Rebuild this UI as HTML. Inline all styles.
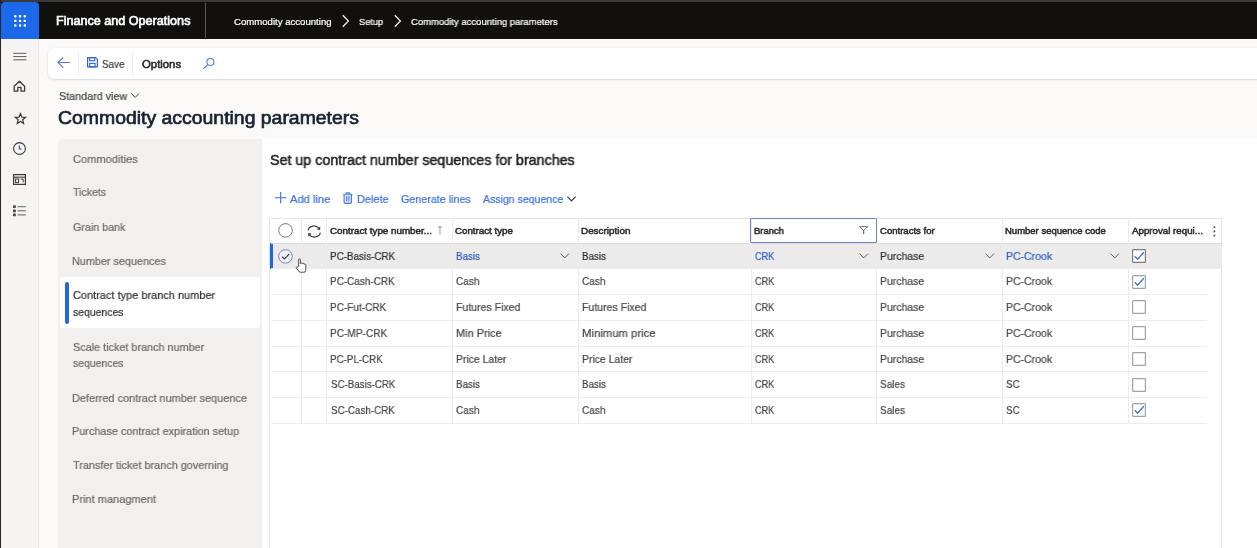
<!DOCTYPE html>
<html lang="en"><head><meta charset="utf-8"><title>Commodity accounting parameters</title>
<style>
html,body{margin:0;padding:0;width:1257px;height:548px;overflow:hidden;background:#faf9f8}
#app{position:relative;left:0;top:0;width:1257px;height:548px;overflow:hidden;background:#faf9f8;font-family:"Liberation Sans",sans-serif}
.t{position:absolute;white-space:nowrap;display:inline-block;transform-origin:0 50%;will-change:transform}
div{position:absolute;box-sizing:border-box}
svg{position:absolute;overflow:visible}
.nav{left:0;top:39px;width:39.3px;height:509px;background:#f5f4f3;border-right:1px solid #e6e5e4}
.hdr{left:0;top:0;width:1257px;height:39px;background:#11100f}
.topstrip{left:0;top:0;width:1257px;height:2.3px;background:#3a3a3a}
.waffle{left:1.3px;top:2.2px;width:37.3px;height:36.8px;background:#1b68e8;border-radius:4px 4px 0 0}
.leftedge{left:0;top:0;width:1.4px;height:548px;background:#262626}
.hdiv{left:205px;top:3px;width:1px;height:35px;background:#5a5958}
.toolbar{left:47.5px;top:47.6px;width:1230px;height:31.2px;background:#fff;border-radius:6px;box-shadow:0 1px 2px rgba(0,0,0,.13),0 0 2px rgba(0,0,0,.07)}
.tdiv{top:52px;width:1px;height:24px;background:#ececec}
.tabs{left:58.2px;top:138.8px;width:204.2px;height:420px;background:#f1f0ef;border-radius:5px 0 0 0}
.content{left:262.3px;top:139px;width:1000px;height:420px;background:#fff}
.tabsel{left:60px;top:277px;width:200px;height:51px;background:#fff;border-radius:3px}
.tabbar{left:64.7px;top:281.5px;width:4px;height:42.3px;background:#1f66e5;border-radius:2px}
.grid{left:269.4px;top:217.5px;width:953px;height:340px;border:1px solid #e6e5e4;background:#fff}
.rowsel{left:270.5px;width:951.5px;background:#ecebea}
.selbar{left:269.5px;width:3.8px;background:#1f66e5}
.hl{left:270.5px;width:936.5px;height:1px;background:#ececec}
.vl{top:218.5px;width:1px;height:205px;background:#ececec}
.focus{left:750.3px;top:217.8px;width:126.5px;height:25.2px;border:1px solid #6b84c6;border-radius:1px}
</style></head>
<body>
<div id="app">
<div class="nav"></div>
<div class="hdr"></div>
<div class="topstrip"></div>
<div class="waffle"></div>
<div class="leftedge"></div>
<div class="hdiv"></div>
<div class="toolbar"></div>
<div class="tdiv" style="left:78px"></div><div class="tdiv" style="left:132px"></div>
<div class="tabs"></div>
<div class="content"></div>
<div class="tabsel"></div><div class="tabbar"></div>
<div class="grid"></div>
<div class="rowsel" style="top:243.0px;height:25.75px"></div>
<div class="selbar" style="top:243.0px;height:26.0px"></div>
<div class="hl" style="top:242.5px;width:951px;background:#dcdcdc"></div>
<div class="hl" style="top:268.25px"></div>
<div class="hl" style="top:294.0px"></div>
<div class="hl" style="top:319.75px"></div>
<div class="hl" style="top:345.5px"></div>
<div class="hl" style="top:371.25px"></div>
<div class="hl" style="top:397.0px"></div>
<div class="hl" style="top:422.75px"></div>
<div class="vl" style="left:301px"></div>
<div class="vl" style="left:326px"></div>
<div class="vl" style="left:451.5px"></div>
<div class="vl" style="left:578px"></div>
<div class="vl" style="left:750.5px"></div>
<div class="vl" style="left:876px"></div>
<div class="vl" style="left:1001.5px"></div>
<div class="vl" style="left:1128px"></div>
<div class="focus"></div>
<!-- waffle -->
<svg style="left:14px;top:15.3px" width="13" height="12" viewBox="0 0 13 12"><g fill="#fff">
<rect x="0.1" y="0.1" width="2.4" height="2.4" rx=".7"/><rect x="4.85" y="0.1" width="2.4" height="2.4" rx=".7"/><rect x="9.6" y="0.1" width="2.4" height="2.4" rx=".7"/>
<rect x="0.1" y="4.7" width="2.4" height="2.4" rx=".7"/><rect x="4.85" y="4.7" width="2.4" height="2.4" rx=".7"/><rect x="9.6" y="4.7" width="2.4" height="2.4" rx=".7"/>
<rect x="0.1" y="9.3" width="2.4" height="2.4" rx=".7"/><rect x="4.85" y="9.3" width="2.4" height="2.4" rx=".7"/><rect x="9.6" y="9.3" width="2.4" height="2.4" rx=".7"/></g></svg>
<!-- hamburger -->
<svg style="left:13px;top:51.7px" width="14" height="10" viewBox="0 0 14 10"><g stroke="#605e5c" stroke-width="1" fill="none"><path d="M0.3 1.3H13.4M0.3 4.55H13.4M0.3 7.8H13.4"/></g></svg>
<!-- home -->
<svg style="left:13.4px;top:80.4px" width="13" height="12" viewBox="0 0 13 12"><path d="M1.2 6.2 6.4 1.2 11.6 6.2V11.2H8V7.3H4.8V11.2H1.2Z" fill="none" stroke="#3b3a39" stroke-width="1.3" stroke-linejoin="round"/></svg>
<!-- star -->
<svg style="left:13.5px;top:111.6px" width="13" height="13" viewBox="0 0 13 13"><path d="M6.40 1.60 7.81 5.06 11.54 5.33 8.68 7.74 9.57 11.37 6.40 9.40 3.23 11.37 4.12 7.74 1.26 5.33 4.99 5.06Z" fill="none" stroke="#3b3a39" stroke-width="1.2" stroke-linejoin="miter"/></svg>
<!-- clock -->
<svg style="left:13.4px;top:141.7px" width="13" height="13" viewBox="0 0 13 13"><circle cx="6.5" cy="6.5" r="5.9" fill="none" stroke="#3b3a39" stroke-width="1.1"/><path d="M6.3 3.4V7H8.8" fill="none" stroke="#3b4a9a" stroke-width="1.1"/></svg>
<!-- workspace -->
<svg style="left:13.4px;top:174.1px" width="13" height="11" viewBox="0 0 13 11"><rect x=".6" y=".6" width="11.8" height="9.8" fill="none" stroke="#3b3a39" stroke-width="1.2"/><path d="M.6 3.2H12.4" stroke="#3b3a39" stroke-width="1.1"/><rect x="2.6" y="5" width="3" height="3.6" fill="none" stroke="#3b3a39" stroke-width="1"/><path d="M7.6 5.2H10.2V8.4" fill="none" stroke="#3b3a39" stroke-width="1"/></svg>
<!-- modules list -->
<svg style="left:13px;top:205.2px" width="13" height="12" viewBox="0 0 13 12"><g fill="#4a4948"><rect x="0" y="0.3" width="2.8" height="2.8" rx=".5"/><rect x="0" y="4.4" width="2.8" height="2.8" rx=".5"/><rect x="0" y="8.5" width="2.8" height="2.8" rx=".5"/></g><path d="M4.6 1.7H12.8M4.6 5.8H12.8M4.6 9.9H12.8" stroke="#605e5c" stroke-width="1"/></svg>
<!-- breadcrumb chevrons -->
<svg style="left:342px;top:15.2px" width="7" height="12" viewBox="0 0 7 12"><path d="M.8.3 6.4 6 .8 11.7" fill="none" stroke="#f3efe6" stroke-width="1.3"/></svg>
<svg style="left:394px;top:15.2px" width="7" height="12" viewBox="0 0 7 12"><path d="M.8.3 6.4 6 .8 11.7" fill="none" stroke="#f3efe6" stroke-width="1.3"/></svg>
<!-- back arrow -->
<svg style="left:57.3px;top:57.2px" width="13" height="11" viewBox="0 0 13 11"><path d="M13 5.5H1M6.2.3 1 5.5l5.2 5.2" fill="none" stroke="#4a7be0" stroke-width="1.1"/></svg>
<!-- save -->
<svg style="left:87px;top:56.9px" width="11" height="10.5" viewBox="0 0 11 10.5"><path d="M.6.6H8.6L10.4 2.4V9.9H.6Z" fill="none" stroke="#2f63d6" stroke-width="1.2"/><rect x="2.7" y=".6" width="5" height="3.2" fill="none" stroke="#2f63d6" stroke-width="1.1"/><rect x="2.7" y="6.4" width="5.4" height="3.5" fill="none" stroke="#2f63d6" stroke-width="1.1"/></svg>
<!-- search -->
<svg style="left:203px;top:57.7px" width="11.5" height="11" viewBox="0 0 11.5 11"><circle cx="7.4" cy="4" r="3.5" fill="none" stroke="#4f7de2" stroke-width="1.1"/><path d="M4.9 6.5.3 10.8" stroke="#4f7de2" stroke-width="1.1"/></svg>
<!-- standard view chevron -->
<svg style="left:131.4px;top:92.9px" width="8.4" height="5" viewBox="0 0 8.4 5"><path d="M.3.4 4.2 4.5 8.1.4" fill="none" stroke="#484644" stroke-width="1"/></svg>
<!-- plus -->
<svg style="left:274.8px;top:192.3px" width="11.4" height="11.4" viewBox="0 0 11.4 11.4"><path d="M5.7 0V11.4M0 5.7H11.4" stroke="#3c6fe0" stroke-width="1.1"/></svg>
<!-- trash -->
<svg style="left:342.5px;top:191.7px" width="9.6" height="12" viewBox="0 0 9.6 12"><path d="M.2 2.3H9.4M3.2 2.3V.8H6.4V2.3M1.1 2.3V10.2Q1.1 11.4 2.3 11.4H7.3Q8.5 11.4 8.5 10.2V2.3" fill="#dbe5fa" stroke="#4a78e0" stroke-width="1.1"/><path d="M3.7 4.3V9.3M5.9 4.3V9.3" stroke="#4a78e0" stroke-width="1.1"/></svg>
<!-- assign chevron -->
<svg style="left:567px;top:195.8px" width="9" height="6" viewBox="0 0 9 6"><path d="M.4.6 4.5 4.9 8.6.6" fill="none" stroke="#323130" stroke-width="1.1"/></svg>
<!-- header select circle -->
<svg style="left:278.2px;top:223px" width="15" height="15" viewBox="0 0 15 15"><circle cx="7.5" cy="7.4" r="6.8" fill="#fff" stroke="#7a7877" stroke-width="1"/></svg>
<!-- refresh -->
<svg style="left:307.3px;top:225px" width="14.5" height="13" viewBox="0 0 14.5 13"><path d="M1.1 5.3A5.9 5 0 0 1 12 3.4M13.3 7.7A5.9 5 0 0 1 2.4 9.6" fill="none" stroke="#3b3a39" stroke-width="1.15"/><path d="M13.2 1.5V4.9L9.9 4.4ZM1.2 11.5V8.1L4.5 8.6Z" fill="#3b3a39"/></svg>
<!-- row check circle -->
<svg style="left:278px;top:248.7px" width="15" height="15" viewBox="0 0 15 15"><circle cx="7.5" cy="7.4" r="6.8" fill="#f1f2f8" stroke="#7485cc" stroke-width="1"/><path d="M3.9 7.6 6.4 10 11.2 5" fill="none" stroke="#3b3a39" stroke-width="1.1"/></svg>
<!-- cursor hand -->
<svg style="left:295px;top:258px" width="12" height="15" viewBox="0 0 12 15"><path d="M3.6 8.6V1.8Q3.6.8 4.5.8Q5.4.8 5.4 1.8V5.6Q5.6 4.9 6.4 4.9Q7.2 4.9 7.3 5.8Q7.6 5.2 8.3 5.3Q9.1 5.4 9.1 6.3Q9.5 5.9 10.1 6.1Q10.8 6.3 10.8 7.2V10.4Q10.8 12.4 9.8 14.2H4.6Q3.5 12.6 1.6 10.6Q.8 9.7 1.4 9.1Q2.1 8.5 2.9 9.3Z" fill="#fff" stroke="#3a3a3a" stroke-width=".9" stroke-linejoin="round"/></svg>
<!-- sort arrow -->
<svg style="left:437px;top:225px" width="6" height="10" viewBox="0 0 6 10"><path d="M3 9.6V.9M.9 2.9 3 .8 5.1 2.9" fill="none" stroke="#9d9b99" stroke-width=".95"/></svg>
<!-- filter -->
<svg style="left:859.3px;top:226.3px" width="9.5" height="9" viewBox="0 0 9.5 9"><path d="M.6.6H8.6L4.6 4.6Z" fill="none" stroke="#6a6968" stroke-width=".9" stroke-linejoin="round"/><path d="M4.6 4.2V8" stroke="#6a6968" stroke-width="1.3"/></svg>
<!-- more dots -->
<svg style="left:1213px;top:225.5px" width="3" height="11" viewBox="0 0 3 11"><g fill="#484644"><rect x=".6" y=".3" width="1.6" height="1.8"/><rect x=".6" y="4.5" width="1.6" height="1.8"/><rect x=".6" y="8.7" width="1.6" height="1.8"/></g></svg>
<!-- row dropdown chevrons -->
<svg style="left:560.1px;top:252.9px" width="9.5" height="6" viewBox="0 0 9.5 6"><path d="M.5.6 4.75 4.9 9 .6" fill="none" stroke="#605e5c" stroke-width="1"/></svg>
<svg style="left:858.7px;top:252.9px" width="9.5" height="6" viewBox="0 0 9.5 6"><path d="M.5.6 4.75 4.9 9 .6" fill="none" stroke="#605e5c" stroke-width="1"/></svg>
<svg style="left:984.6px;top:252.9px" width="9.5" height="6" viewBox="0 0 9.5 6"><path d="M.5.6 4.75 4.9 9 .6" fill="none" stroke="#605e5c" stroke-width="1"/></svg>
<svg style="left:1110.1px;top:252.9px" width="9.5" height="6" viewBox="0 0 9.5 6"><path d="M.5.6 4.75 4.9 9 .6" fill="none" stroke="#605e5c" stroke-width="1"/></svg>
<!-- checkboxes -->
<svg style="left:1132.2px;top:248.90px" width="14" height="14" viewBox="0 0 14 14"><rect x=".6" y=".6" width="12.8" height="12.8" rx=".7" fill="#fff" stroke="#7a7978" stroke-width="1.2"/><path d="M2.8 7.2 5.6 10.2 11.8 3.2" fill="none" stroke="#4170d8" stroke-width="1.3"/></svg>
<svg style="left:1132.2px;top:274.65px" width="14" height="14" viewBox="0 0 14 14"><rect x=".6" y=".6" width="12.8" height="12.8" rx=".7" fill="#fff" stroke="#a3a2a0" stroke-width="1.2"/><path d="M2.8 7.2 5.6 10.2 11.8 3.2" fill="none" stroke="#4170d8" stroke-width="1.3"/></svg>
<svg style="left:1132.2px;top:300.40px" width="14" height="14" viewBox="0 0 14 14"><rect x=".6" y=".6" width="12.8" height="12.8" rx=".7" fill="#fff" stroke="#a3a2a0" stroke-width="1.2"/></svg>
<svg style="left:1132.2px;top:326.15px" width="14" height="14" viewBox="0 0 14 14"><rect x=".6" y=".6" width="12.8" height="12.8" rx=".7" fill="#fff" stroke="#a3a2a0" stroke-width="1.2"/></svg>
<svg style="left:1132.2px;top:351.90px" width="14" height="14" viewBox="0 0 14 14"><rect x=".6" y=".6" width="12.8" height="12.8" rx=".7" fill="#fff" stroke="#a3a2a0" stroke-width="1.2"/></svg>
<svg style="left:1132.2px;top:377.65px" width="14" height="14" viewBox="0 0 14 14"><rect x=".6" y=".6" width="12.8" height="12.8" rx=".7" fill="#fff" stroke="#a3a2a0" stroke-width="1.2"/></svg>
<svg style="left:1132.2px;top:403.40px" width="14" height="14" viewBox="0 0 14 14"><rect x=".6" y=".6" width="12.8" height="12.8" rx=".7" fill="#fff" stroke="#a3a2a0" stroke-width="1.2"/><path d="M2.8 7.2 5.6 10.2 11.8 3.2" fill="none" stroke="#4170d8" stroke-width="1.3"/></svg>

<span class="t" style="left:55.69px;top:13.10px;font-size:12.2px;line-height:17px;color:#ffffff;-webkit-text-stroke:0.63px #ffffff;transform:scaleX(1.0334);">Finance and Operations</span>
<span class="t" style="left:233.62px;top:15.10px;font-size:9.6px;line-height:13px;color:#ffffff;-webkit-text-stroke:0.22px #ffffff;">Commodity accounting</span>
<span class="t" style="left:358.69px;top:15.10px;font-size:9.6px;line-height:13px;color:#ffffff;-webkit-text-stroke:0.22px #ffffff;transform:scaleX(0.9608);">Setup</span>
<span class="t" style="left:410.63px;top:15.10px;font-size:9.6px;line-height:13px;color:#ffffff;-webkit-text-stroke:0.22px #ffffff;transform:scaleX(0.9854);">Commodity accounting parameters</span>
<span class="t" style="left:102.05px;top:57.10px;font-size:11px;line-height:15px;color:#3b3a39;-webkit-text-stroke:0.22px #3b3a39;transform:scaleX(0.8968);">Save</span>
<span class="t" style="left:141.73px;top:57.10px;font-size:11px;line-height:15px;color:#252423;-webkit-text-stroke:0.52px #252423;transform:scaleX(1.0314);">Options</span>
<span class="t" style="left:59.12px;top:88.10px;font-size:11.2px;line-height:16px;color:#484644;-webkit-text-stroke:0.22px #484644;transform:scaleX(0.9626);">Standard view</span>
<span class="t" style="left:58.36px;top:106.10px;font-size:17.6px;line-height:25px;color:#16202f;-webkit-text-stroke:0.63px #16202f;transform:scaleX(1.1032);">Commodity accounting parameters</span>
<span class="t" style="left:72.54px;top:151.10px;font-size:11.5px;line-height:16px;color:#6b6a68;-webkit-text-stroke:0.22px #6b6a68;transform:scaleX(0.9649);">Commodities</span>
<span class="t" style="left:72.86px;top:184.10px;font-size:11.5px;line-height:16px;color:#6b6a68;-webkit-text-stroke:0.22px #6b6a68;transform:scaleX(0.9171);">Tickets</span>
<span class="t" style="left:72.56px;top:219.10px;font-size:11.5px;line-height:16px;color:#6b6a68;-webkit-text-stroke:0.22px #6b6a68;transform:scaleX(0.9316);">Grain bank</span>
<span class="t" style="left:72.22px;top:253.10px;font-size:11.5px;line-height:16px;color:#6b6a68;-webkit-text-stroke:0.22px #6b6a68;transform:scaleX(0.9412);">Number sequences</span>
<span class="t" style="left:72.55px;top:287.10px;font-size:11.5px;line-height:16px;color:#323130;-webkit-text-stroke:0.22px #323130;transform:scaleX(0.9549);">Contract type branch number</span>
<span class="t" style="left:72.81px;top:304.10px;font-size:11.5px;line-height:16px;color:#323130;-webkit-text-stroke:0.22px #323130;transform:scaleX(0.9073);">sequences</span>
<span class="t" style="left:72.61px;top:339.10px;font-size:11.5px;line-height:16px;color:#6b6a68;-webkit-text-stroke:0.22px #6b6a68;transform:scaleX(0.9419);">Scale ticket branch number</span>
<span class="t" style="left:72.81px;top:355.10px;font-size:11.5px;line-height:16px;color:#6b6a68;-webkit-text-stroke:0.22px #6b6a68;transform:scaleX(0.9073);">sequences</span>
<span class="t" style="left:72.41px;top:390.10px;font-size:11.5px;line-height:16px;color:#6b6a68;-webkit-text-stroke:0.22px #6b6a68;transform:scaleX(0.9504);">Deferred contract number sequence</span>
<span class="t" style="left:72.41px;top:423.10px;font-size:11.5px;line-height:16px;color:#6b6a68;-webkit-text-stroke:0.22px #6b6a68;transform:scaleX(0.9444);">Purchase contract expiration setup</span>
<span class="t" style="left:73.06px;top:457.10px;font-size:11.5px;line-height:16px;color:#6b6a68;-webkit-text-stroke:0.22px #6b6a68;transform:scaleX(0.9455);">Transfer ticket branch governing</span>
<span class="t" style="left:72.40px;top:491.10px;font-size:11.5px;line-height:16px;color:#6b6a68;-webkit-text-stroke:0.22px #6b6a68;transform:scaleX(0.9600);">Print managment</span>
<span class="t" style="left:269.61px;top:150.10px;font-size:14.5px;line-height:20px;color:#242424;-webkit-text-stroke:0.52px #242424;transform:scaleX(0.9843);">Set up contract number sequences for branches</span>
<span class="t" style="left:290.08px;top:191.10px;font-size:11.5px;line-height:16px;color:#3d70e0;-webkit-text-stroke:0.22px #3d70e0;transform:scaleX(0.9697);">Add line</span>
<span class="t" style="left:356.71px;top:191.10px;font-size:11.5px;line-height:16px;color:#3d70e0;-webkit-text-stroke:0.22px #3d70e0;transform:scaleX(0.9527);">Delete</span>
<span class="t" style="left:400.56px;top:191.10px;font-size:11.5px;line-height:16px;color:#3d70e0;-webkit-text-stroke:0.22px #3d70e0;transform:scaleX(0.9321);">Generate lines</span>
<span class="t" style="left:483.08px;top:191.10px;font-size:11.5px;line-height:16px;color:#3d70e0;-webkit-text-stroke:0.22px #3d70e0;transform:scaleX(0.9166);">Assign sequence</span>
<span class="t" style="left:329.77px;top:224.10px;font-size:9.5px;line-height:13px;color:#2b2a29;-webkit-text-stroke:0.52px #2b2a29;transform:scaleX(1.0315);">Contract type number...</span>
<span class="t" style="left:455.27px;top:224.10px;font-size:9.5px;line-height:13px;color:#2b2a29;-webkit-text-stroke:0.52px #2b2a29;transform:scaleX(1.0247);">Contract type</span>
<span class="t" style="left:580.96px;top:224.10px;font-size:9.5px;line-height:13px;color:#2b2a29;-webkit-text-stroke:0.52px #2b2a29;transform:scaleX(1.0395);">Description</span>
<span class="t" style="left:754.48px;top:224.10px;font-size:9.5px;line-height:13px;color:#2b2a29;-webkit-text-stroke:0.52px #2b2a29;transform:scaleX(0.9920);">Branch</span>
<span class="t" style="left:879.78px;top:224.10px;font-size:9.5px;line-height:13px;color:#2b2a29;-webkit-text-stroke:0.52px #2b2a29;transform:scaleX(1.0042);">Contracts for</span>
<span class="t" style="left:1005.48px;top:224.10px;font-size:9.5px;line-height:13px;color:#2b2a29;-webkit-text-stroke:0.52px #2b2a29;">Number sequence code</span>
<span class="t" style="left:1131.75px;top:224.10px;font-size:9.5px;line-height:13px;color:#2b2a29;-webkit-text-stroke:0.52px #2b2a29;transform:scaleX(1.0244);">Approval requi...</span>
<span class="t" style="left:330.29px;top:248.10px;font-size:11.5px;line-height:16px;color:#323130;-webkit-text-stroke:0.22px #323130;transform:scaleX(0.8578);">PC-Basis-CRK</span>
<span class="t" style="left:455.79px;top:248.10px;font-size:11.5px;line-height:16px;color:#2f5fc4;-webkit-text-stroke:0.22px #2f5fc4;transform:scaleX(0.8523);">Basis</span>
<span class="t" style="left:581.79px;top:248.10px;font-size:11.5px;line-height:16px;color:#323130;-webkit-text-stroke:0.22px #323130;transform:scaleX(0.8523);">Basis</span>
<span class="t" style="left:754.62px;top:248.10px;font-size:11.5px;line-height:16px;color:#2f5fc4;-webkit-text-stroke:0.22px #2f5fc4;transform:scaleX(0.7987);">CRK</span>
<span class="t" style="left:879.74px;top:248.10px;font-size:11.5px;line-height:16px;color:#323130;-webkit-text-stroke:0.22px #323130;transform:scaleX(0.9080);">Purchase</span>
<span class="t" style="left:1005.74px;top:248.10px;font-size:11.5px;line-height:16px;color:#2f5fc4;-webkit-text-stroke:0.22px #2f5fc4;transform:scaleX(0.9141);">PC-Crook</span>
<span class="t" style="left:330.28px;top:273.10px;font-size:11.5px;line-height:16px;color:#484644;-webkit-text-stroke:0.22px #484644;transform:scaleX(0.8659);">PC-Cash-CRK</span>
<span class="t" style="left:456.09px;top:273.10px;font-size:11.5px;line-height:16px;color:#484644;-webkit-text-stroke:0.22px #484644;transform:scaleX(0.8738);">Cash</span>
<span class="t" style="left:582.09px;top:273.10px;font-size:11.5px;line-height:16px;color:#484644;-webkit-text-stroke:0.22px #484644;transform:scaleX(0.8738);">Cash</span>
<span class="t" style="left:754.62px;top:273.10px;font-size:11.5px;line-height:16px;color:#484644;-webkit-text-stroke:0.22px #484644;transform:scaleX(0.7987);">CRK</span>
<span class="t" style="left:879.74px;top:273.10px;font-size:11.5px;line-height:16px;color:#484644;-webkit-text-stroke:0.22px #484644;transform:scaleX(0.9080);">Purchase</span>
<span class="t" style="left:1005.74px;top:273.10px;font-size:11.5px;line-height:16px;color:#484644;-webkit-text-stroke:0.22px #484644;transform:scaleX(0.9141);">PC-Crook</span>
<span class="t" style="left:330.27px;top:299.10px;font-size:11.5px;line-height:16px;color:#484644;-webkit-text-stroke:0.22px #484644;transform:scaleX(0.8716);">PC-Fut-CRK</span>
<span class="t" style="left:455.74px;top:299.10px;font-size:11.5px;line-height:16px;color:#484644;-webkit-text-stroke:0.22px #484644;transform:scaleX(0.9151);">Futures Fixed</span>
<span class="t" style="left:581.74px;top:299.10px;font-size:11.5px;line-height:16px;color:#484644;-webkit-text-stroke:0.22px #484644;transform:scaleX(0.9151);">Futures Fixed</span>
<span class="t" style="left:754.62px;top:299.10px;font-size:11.5px;line-height:16px;color:#484644;-webkit-text-stroke:0.22px #484644;transform:scaleX(0.7987);">CRK</span>
<span class="t" style="left:879.74px;top:299.10px;font-size:11.5px;line-height:16px;color:#484644;-webkit-text-stroke:0.22px #484644;transform:scaleX(0.9080);">Purchase</span>
<span class="t" style="left:1005.74px;top:299.10px;font-size:11.5px;line-height:16px;color:#484644;-webkit-text-stroke:0.22px #484644;transform:scaleX(0.9141);">PC-Crook</span>
<span class="t" style="left:330.27px;top:325.10px;font-size:11.5px;line-height:16px;color:#484644;-webkit-text-stroke:0.22px #484644;transform:scaleX(0.8784);">PC-MP-CRK</span>
<span class="t" style="left:455.71px;top:325.10px;font-size:11.5px;line-height:16px;color:#484644;-webkit-text-stroke:0.22px #484644;transform:scaleX(0.9528);">Min Price</span>
<span class="t" style="left:581.68px;top:325.10px;font-size:11.5px;line-height:16px;color:#484644;-webkit-text-stroke:0.22px #484644;transform:scaleX(0.9860);">Minimum price</span>
<span class="t" style="left:754.62px;top:325.10px;font-size:11.5px;line-height:16px;color:#484644;-webkit-text-stroke:0.22px #484644;transform:scaleX(0.7987);">CRK</span>
<span class="t" style="left:879.74px;top:325.10px;font-size:11.5px;line-height:16px;color:#484644;-webkit-text-stroke:0.22px #484644;transform:scaleX(0.9080);">Purchase</span>
<span class="t" style="left:1005.74px;top:325.10px;font-size:11.5px;line-height:16px;color:#484644;-webkit-text-stroke:0.22px #484644;transform:scaleX(0.9141);">PC-Crook</span>
<span class="t" style="left:330.29px;top:351.10px;font-size:11.5px;line-height:16px;color:#484644;-webkit-text-stroke:0.22px #484644;transform:scaleX(0.8506);">PC-PL-CRK</span>
<span class="t" style="left:455.75px;top:351.10px;font-size:11.5px;line-height:16px;color:#484644;-webkit-text-stroke:0.22px #484644;transform:scaleX(0.9050);">Price Later</span>
<span class="t" style="left:581.75px;top:351.10px;font-size:11.5px;line-height:16px;color:#484644;-webkit-text-stroke:0.22px #484644;transform:scaleX(0.9050);">Price Later</span>
<span class="t" style="left:754.62px;top:351.10px;font-size:11.5px;line-height:16px;color:#484644;-webkit-text-stroke:0.22px #484644;transform:scaleX(0.7987);">CRK</span>
<span class="t" style="left:879.74px;top:351.10px;font-size:11.5px;line-height:16px;color:#484644;-webkit-text-stroke:0.22px #484644;transform:scaleX(0.9080);">Purchase</span>
<span class="t" style="left:1005.74px;top:351.10px;font-size:11.5px;line-height:16px;color:#484644;-webkit-text-stroke:0.22px #484644;transform:scaleX(0.9141);">PC-Crook</span>
<span class="t" style="left:330.65px;top:376.10px;font-size:11.5px;line-height:16px;color:#484644;-webkit-text-stroke:0.22px #484644;transform:scaleX(0.8464);">SC-Basis-CRK</span>
<span class="t" style="left:455.79px;top:376.10px;font-size:11.5px;line-height:16px;color:#484644;-webkit-text-stroke:0.22px #484644;transform:scaleX(0.8523);">Basis</span>
<span class="t" style="left:581.79px;top:376.10px;font-size:11.5px;line-height:16px;color:#484644;-webkit-text-stroke:0.22px #484644;transform:scaleX(0.8523);">Basis</span>
<span class="t" style="left:754.62px;top:376.10px;font-size:11.5px;line-height:16px;color:#484644;-webkit-text-stroke:0.22px #484644;transform:scaleX(0.7987);">CRK</span>
<span class="t" style="left:880.14px;top:376.10px;font-size:11.5px;line-height:16px;color:#484644;-webkit-text-stroke:0.22px #484644;transform:scaleX(0.8730);">Sales</span>
<span class="t" style="left:1006.15px;top:376.10px;font-size:11.5px;line-height:16px;color:#484644;-webkit-text-stroke:0.22px #484644;transform:scaleX(0.8528);">SC</span>
<span class="t" style="left:330.65px;top:402.10px;font-size:11.5px;line-height:16px;color:#484644;-webkit-text-stroke:0.22px #484644;transform:scaleX(0.8542);">SC-Cash-CRK</span>
<span class="t" style="left:456.09px;top:402.10px;font-size:11.5px;line-height:16px;color:#484644;-webkit-text-stroke:0.22px #484644;transform:scaleX(0.8738);">Cash</span>
<span class="t" style="left:582.09px;top:402.10px;font-size:11.5px;line-height:16px;color:#484644;-webkit-text-stroke:0.22px #484644;transform:scaleX(0.8738);">Cash</span>
<span class="t" style="left:754.62px;top:402.10px;font-size:11.5px;line-height:16px;color:#484644;-webkit-text-stroke:0.22px #484644;transform:scaleX(0.7987);">CRK</span>
<span class="t" style="left:880.14px;top:402.10px;font-size:11.5px;line-height:16px;color:#484644;-webkit-text-stroke:0.22px #484644;transform:scaleX(0.8730);">Sales</span>
<span class="t" style="left:1006.15px;top:402.10px;font-size:11.5px;line-height:16px;color:#484644;-webkit-text-stroke:0.22px #484644;transform:scaleX(0.8528);">SC</span>
</div>
</body></html>
